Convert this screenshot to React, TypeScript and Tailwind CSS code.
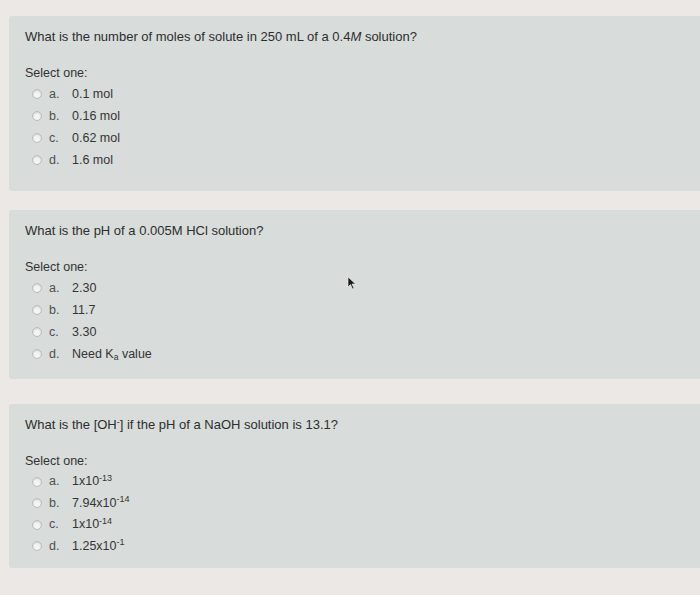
import type { ReactNode } from 'react'

type Question = {
  prompt: ReactNode
  options: ReactNode[]
  rowClass: string
  boxClass: string
}

const questions: Question[] = [
  {
    prompt: (
      <>
        What is the number of moles of solute in 250 mL of a 0.4<i>M</i> solution?
      </>
    ),
    options: ['0.1 mol', '0.16 mol', '0.62 mol', '1.6 mol'],
    rowClass: 'h-[22px]',
    boxClass: 'pb-5',
  },
  {
    prompt: 'What is the pH of a 0.005M HCl solution?',
    options: [
      '2.30',
      '11.7',
      '3.30',
      <>
        Need K<sub className="text-[8.5px]">a</sub> value
      </>,
    ],
    rowClass: 'h-[22px]',
    boxClass: 'pb-[14px]',
  },
  {
    prompt: (
      <>
        What is the [OH<sup className="text-[9px]">-</sup>] if the pH of a NaOH solution is 13.1?
      </>
    ),
    options: [
      <>
        1x10<sup className="text-[9px]">-13</sup>
      </>,
      <>
        7.94x10<sup className="text-[9px]">-14</sup>
      </>,
      <>
        1x10<sup className="text-[9px]">-14</sup>
      </>,
      <>
        1.25x10<sup className="text-[9px]">-1</sup>
      </>,
    ],
    rowClass: 'h-[21.5px]',
    boxClass: 'pb-[11px] mt-[6px]',
  },
]

const letters = ['a.', 'b.', 'c.', 'd.']

const Radio = () => (
  <span className="shrink-0 w-[10px] h-[10px] rounded-full bg-[#f3f4f3] border border-[#b8bcba] shadow-[inset_0_1px_2px_rgba(0,0,0,0.15)]" />
)

// mouse pointer caught in the screenshot
const Cursor = () => (
  <svg
    className="absolute left-[347px] top-[276px]"
    width="10"
    height="14"
    viewBox="0 0 10 14"
  >
    <path d="M1 1 L1 11 L3.5 8.5 L5.5 13 L7 12.3 L5 8 L8.5 8 Z" fill="#1a1a1a" stroke="#f5f5f5" strokeWidth="0.6" />
  </svg>
)

const QuestionCard = ({ question }: { question: Question }) => {
  return (
    <div className={`ml-[9px] bg-[#d8dcda] rounded-l-[3px] pl-4 pt-[13px] ${question.boxClass}`}>
      <p className="h-4 leading-4 text-[13px] text-[#2e2e2e]">{question.prompt}</p>
      <p className="mt-5 h-4 leading-4 text-[12.5px] text-[#333]">Select one:</p>
      <div className="mt-[2px] flex flex-col">
        {question.options.map((option, i) => (
          <div
            key={i}
            className={`${question.rowClass} flex items-center pl-[7px] text-[12.5px] text-[#353535]`}
          >
            <Radio />
            <span className="ml-[7px] w-[23px] text-[#505050]">{letters[i]}</span>
            <span>{option}</span>
          </div>
        ))}
      </div>
    </div>
  )
}

const App = () => {
  return (
    <div
      className="relative w-[700px] h-[595px] bg-[#ebe8e5] pt-4 flex flex-col gap-[19px] overflow-hidden"
      style={{ fontFamily: '"Liberation Sans", Arial, sans-serif' }}
    >
      {questions.map((q, i) => (
        <QuestionCard key={i} question={q} />
      ))}
      <Cursor />
    </div>
  )
}

export default App
